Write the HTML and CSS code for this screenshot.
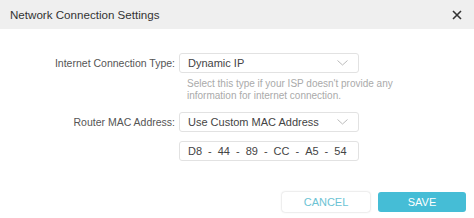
FILE: index.html
```html
<!DOCTYPE html>
<html lang="en">
<head>
    <meta charset="UTF-8">
    <title>Network Connection Settings</title>
    <link rel="stylesheet" href="styles.css">
</head>
<body>
    <div class="dialog">
        <header class="dialog-head">
            <span class="dialog-title">Network Connection Settings</span>
            <span class="close">
                <svg width="10" height="10" viewBox="0 0 10 10"><path d="M1 1L9 9M9 1L1 9" stroke="#333" stroke-width="1.6" fill="none"/></svg>
            </span>
        </header>
        <div class="form">
            <div class="row">
                <label class="label">Internet Connection Type:</label>
                <div class="field">
                    <div class="select">
                        <span>Dynamic IP</span>
                        <svg class="arrow" width="11" height="6" viewBox="0 0 11 6"><path d="M0.5 0.5L5.5 5L10.5 0.5" stroke="#bbb" stroke-width="1" fill="none"/></svg>
                    </div>
                    <p class="hint">Select this type if your ISP doesn't provide any information for internet connection.</p>
                </div>
            </div>
            <div class="row">
                <label class="label">Router MAC Address:</label>
                <div class="field">
                    <div class="select">
                        <span>Use Custom MAC Address</span>
                        <svg class="arrow" width="11" height="6" viewBox="0 0 11 6"><path d="M0.5 0.5L5.5 5L10.5 0.5" stroke="#bbb" stroke-width="1" fill="none"/></svg>
                    </div>
                    <div class="mac">
                        <span>D8</span><span class="dash">-</span>
                        <span>44</span><span class="dash">-</span>
                        <span>89</span><span class="dash">-</span>
                        <span>CC</span><span class="dash">-</span>
                        <span>A5</span><span class="dash">-</span>
                        <span>54</span>
                    </div>
                </div>
            </div>
        </div>
        <div class="actions">
            <button class="btn cancel">CANCEL</button>
            <button class="btn save">SAVE</button>
        </div>
    </div>
</body>
</html>
```

FILE: styles.css
```css
body{
    margin: 0;
    background-color: #fff;
    font-family: "Liberation Sans", Arial, sans-serif;
    color: #333;
}
.dialog{
    width: 474px;
    height: 218px;
}
.dialog-head{
    display: flex;
    justify-content: space-between;
    align-items: center;
    height: 29px;
    padding: 0 12px 0 10px;
    background-color: #efefef;
    box-sizing: border-box;
}
.dialog-title{
    font-size: 11.6px;
    color: #333;
}
.close{
    display: flex;
}

.form{
    padding-top: 24px;
}
.row{
    display: grid;
    grid-template-columns: 175px 180px;
    column-gap: 4px;
    margin-bottom: 10px;
}
.label{
    text-align: right;
    font-size: 10.5px;
    color: #555;
    line-height: 20px;
}
.select{
    display: flex;
    justify-content: space-between;
    align-items: center;
    height: 20px;
    padding: 0 10px 0 8px;
    border: 1px solid #e2e2e2;
    border-radius: 3px;
    box-sizing: border-box;
    font-size: 11px;
    color: #444;
}
.hint{
    margin: 5px 0 0 0;
    padding: 0 0 0 8px;
    width: 218px;
    font-size: 10px;
    line-height: 12px;
    color: #aaa;
}
.mac{
    display: flex;
    align-items: center;
    gap: 6px;
    height: 20px;
    margin-top: 9px;
    padding: 0 8px;
    border: 1px solid #e2e2e2;
    border-radius: 3px;
    box-sizing: border-box;
    font-size: 11px;
    color: #444;
}

.actions{
    display: flex;
    justify-content: flex-end;
    gap: 8px;
    padding: 21px 8px 0 0;
}
.btn{
    width: 88px;
    height: 20px;
    border: none;
    border-radius: 3px;
    font-family: "Liberation Sans", Arial, sans-serif;
    font-size: 11px;
    cursor: pointer;
}
.cancel{
    background-color: #fff;
    color: #6cc3d4;
    box-shadow: 0 0 2px rgba(0,0,0,0.25);
}
.save{
    background-color: #45bdd6;
    color: #fff;
}
```
